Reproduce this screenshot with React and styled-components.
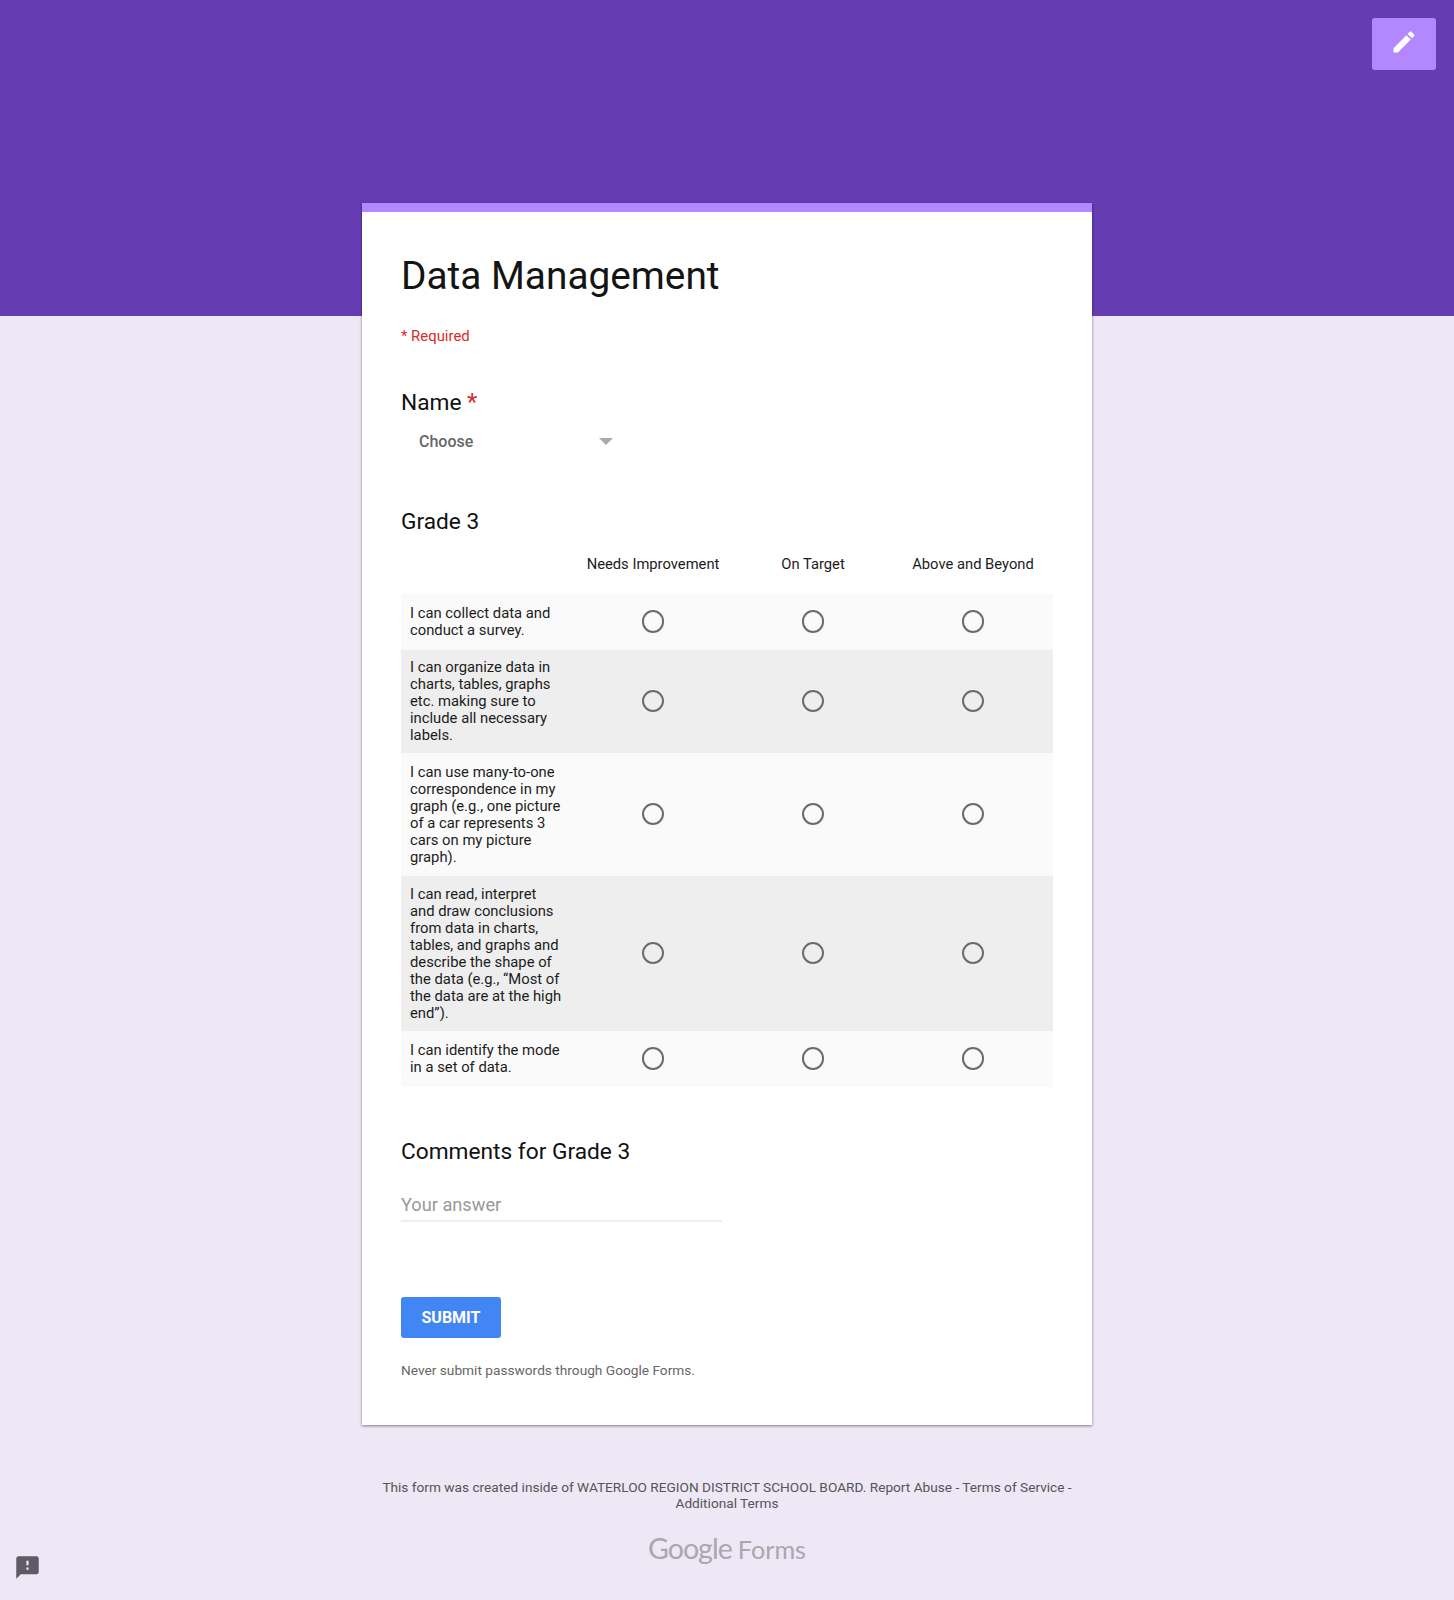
import React from "react";
import styled, { createGlobalStyle } from "styled-components";

const Global = createGlobalStyle`
  html, body { margin: 0; padding: 0; }
  body { font-family: Roboto, "Liberation Sans", Arial, sans-serif; background: #ede7f6; }
  * { box-sizing: border-box; }
`;

const Page = styled.div`
  position: relative;
  height: 1600px;
  padding-top: 203px;
  overflow: hidden;
  background: linear-gradient(to bottom, #663cb3 0, #663cb3 316px, #ede7f6 316px, #ede7f6 100%);
`;

const EditButton = styled.div`
  position: absolute;
  top: 18px;
  right: 18px;
  width: 64px;
  height: 52px;
  padding-bottom: 5px;
  border-radius: 3px;
  background: #b388ff;
  display: flex;
  align-items: center;
  justify-content: center;
  color: #fff;
`;

const Card = styled.main`
  width: 730px;
  height: 1222px;
  margin: 0 auto;
  background: #fff;
  border-top: 9px solid #b388ff;
  padding: 0 39px;
  box-shadow: 0 1px 3px rgba(0, 0, 0, 0.3), 0 1px 2px rgba(0, 0, 0, 0.2);
`;

const Title = styled.h1`
  margin: 0;
  padding-top: 42px;
  font-size: 38.8px;
  line-height: 44px;
  font-weight: 400;
  color: #141414;
`;

const RequiredNote = styled.div`
  margin-top: 28px;
  font-size: 14.9px;
  line-height: 20px;
  color: #d92a2a;
`;

const QuestionTitle = styled.h2`
  margin: ${(p) => p.$top}px 0 0;
  font-size: 22.7px;
  line-height: 28px;
  font-weight: 400;
  color: #111;
`;

const Star = styled.span`
  color: #d92a2a;
  font-size: 24px;
  line-height: 0;
`;

const Dropdown = styled.div`
  margin-top: 10px;
  width: 212px;
  height: 28px;
  padding-left: 18px;
  display: flex;
  align-items: center;
  justify-content: space-between;
  font-size: 16px;
  font-weight: 500;
  color: #666;
`;

const Caret = styled.span`
  width: 0;
  height: 0;
  border-left: 7px solid transparent;
  border-right: 7px solid transparent;
  border-top: 7px solid #aaa;
`;

const MatrixRow = styled.div`
  display: grid;
  grid-template-columns: 172px repeat(3, 1fr);
  align-items: center;
  min-height: ${(p) => p.$height}px;
  background: ${(p) => p.$bg};
`;

const HeaderRow = styled(MatrixRow)`
  margin-top: 11px;
  margin-bottom: 13px;
`;

const ColumnLabel = styled.div`
  text-align: center;
  font-size: 14.75px;
  line-height: 17px;
  color: #1c1c1c;
`;

const RowLabel = styled.div`
  padding: 0 10px 0 9px;
  font-size: 14.8px;
  line-height: 17px;
  color: #1c1c1c;
`;

const RadioCell = styled.div`
  display: flex;
  justify-content: center;
`;

const Radio = styled.span`
  width: 22.5px;
  height: 22.5px;
  margin-top: -1px;
  border-radius: 50%;
  border: 2px solid #6b6b6b;
`;

const AnswerLine = styled.div`
  margin-top: 26px;
  width: 321px;
  height: 30px;
  border-bottom: 2px solid #eee;
  font-size: 18.2px;
  line-height: 26px;
  color: #999;
`;

const SubmitButton = styled.button`
  display: block;
  margin-top: 75px;
  width: 100px;
  height: 41px;
  border: 0;
  border-radius: 3px;
  background: #4285f4;
  color: #fff;
  font-family: inherit;
  font-size: 16px;
  font-weight: 700;
  padding: 0;
`;

const PasswordNote = styled.div`
  margin-top: 22px;
  font-size: 13.7px;
  line-height: 20px;
  color: #666;
`;

const Footer = styled.footer`
  width: 730px;
  margin: 54px auto 0;
  text-align: center;
  font-size: 13.66px;
  line-height: 16px;
  color: #555;
`;

const LogoRow = styled.div`
  margin-top: 19px;
  display: flex;
  justify-content: center;
  align-items: baseline;
  gap: 6px;
  color: #a8a8ad;
  font-family: Lato, sans-serif;
`;

const LogoGoogle = styled.span`
  font-size: 28.6px;
  line-height: 36px;
  letter-spacing: -1px;
`;

const LogoForms = styled.span`
  font-size: 25.2px;
  line-height: 36px;
`;

const ReportIcon = styled.div`
  position: absolute;
  left: 14px;
  top: 1554px;
  color: #5f5a66;
  line-height: 0;
`;

const columns = ["Needs Improvement", "On Target", "Above and Beyond"];
const rows = [
  { h: 56, t: "I can collect data and conduct a survey." },
  { h: 103, t: "I can organize data in charts, tables, graphs etc. making sure to include all necessary labels." },
  { h: 123, t: "I can use many-to-one correspondence in my graph (e.g., one picture of a car represents 3 cars on my picture graph)." },
  { h: 155, t: "I can read, interpret and draw conclusions from data in charts, tables, and graphs and describe the shape of the data (e.g., “Most of the data are at the high end”)." },
  { h: 56, t: "I can identify the mode in a set of data." },
];

export default function App() {
  return (
    <Page>
      <Global />
      <EditButton>
        <svg width="28" height="28" viewBox="0 0 24 24" fill="currentColor">
          <path d="M3 17.25V21h3.75L17.81 9.94l-3.75-3.75L3 17.25zM20.71 7.04c.39-.39.39-1.02 0-1.41l-2.34-2.34c-.39-.39-1.02-.39-1.41 0l-1.83 1.83 3.75 3.75 1.83-1.83z" />
        </svg>
      </EditButton>
      <Card>
        <Title>Data Management</Title>
        <RequiredNote>* Required</RequiredNote>
        <QuestionTitle $top={43}>Name <Star>*</Star></QuestionTitle>
        <Dropdown>
          <span>Choose</span>
          <Caret />
        </Dropdown>
        <QuestionTitle $top={53}>Grade 3</QuestionTitle>
        <HeaderRow $height={34} $bg="transparent">
          <span />
          {columns.map((c) => (
            <ColumnLabel key={c}>{c}</ColumnLabel>
          ))}
        </HeaderRow>
        {rows.map((r, i) => (
          <MatrixRow key={i} $height={r.h} $bg={i % 2 ? "#eeeeee" : "#fafafa"}>
            <RowLabel>{r.t}</RowLabel>
            {columns.map((c) => (
              <RadioCell key={c}>
                <Radio />
              </RadioCell>
            ))}
          </MatrixRow>
        ))}
        <QuestionTitle $top={51}>Comments for Grade 3</QuestionTitle>
        <AnswerLine>Your answer</AnswerLine>
        <SubmitButton>SUBMIT</SubmitButton>
        <PasswordNote>Never submit passwords through Google Forms.</PasswordNote>
      </Card>
      <Footer>
        This form was created inside of WATERLOO REGION DISTRICT SCHOOL BOARD. Report Abuse - Terms of Service - Additional Terms
        <LogoRow>
          <LogoGoogle>Google</LogoGoogle>
          <LogoForms>Forms</LogoForms>
        </LogoRow>
      </Footer>
      <ReportIcon>
        <svg width="27" height="27" viewBox="0 0 24 24" fill="currentColor">
          <path d="M20 2H4c-1.1 0-1.99.9-1.99 2L2 22l4-4h14c1.1 0 2-.9 2-2V4c0-1.1-.9-2-2-2zm-7 12h-2v-2h2v2zm0-4h-2V6h2v4z" />
        </svg>
      </ReportIcon>
    </Page>
  );
}
